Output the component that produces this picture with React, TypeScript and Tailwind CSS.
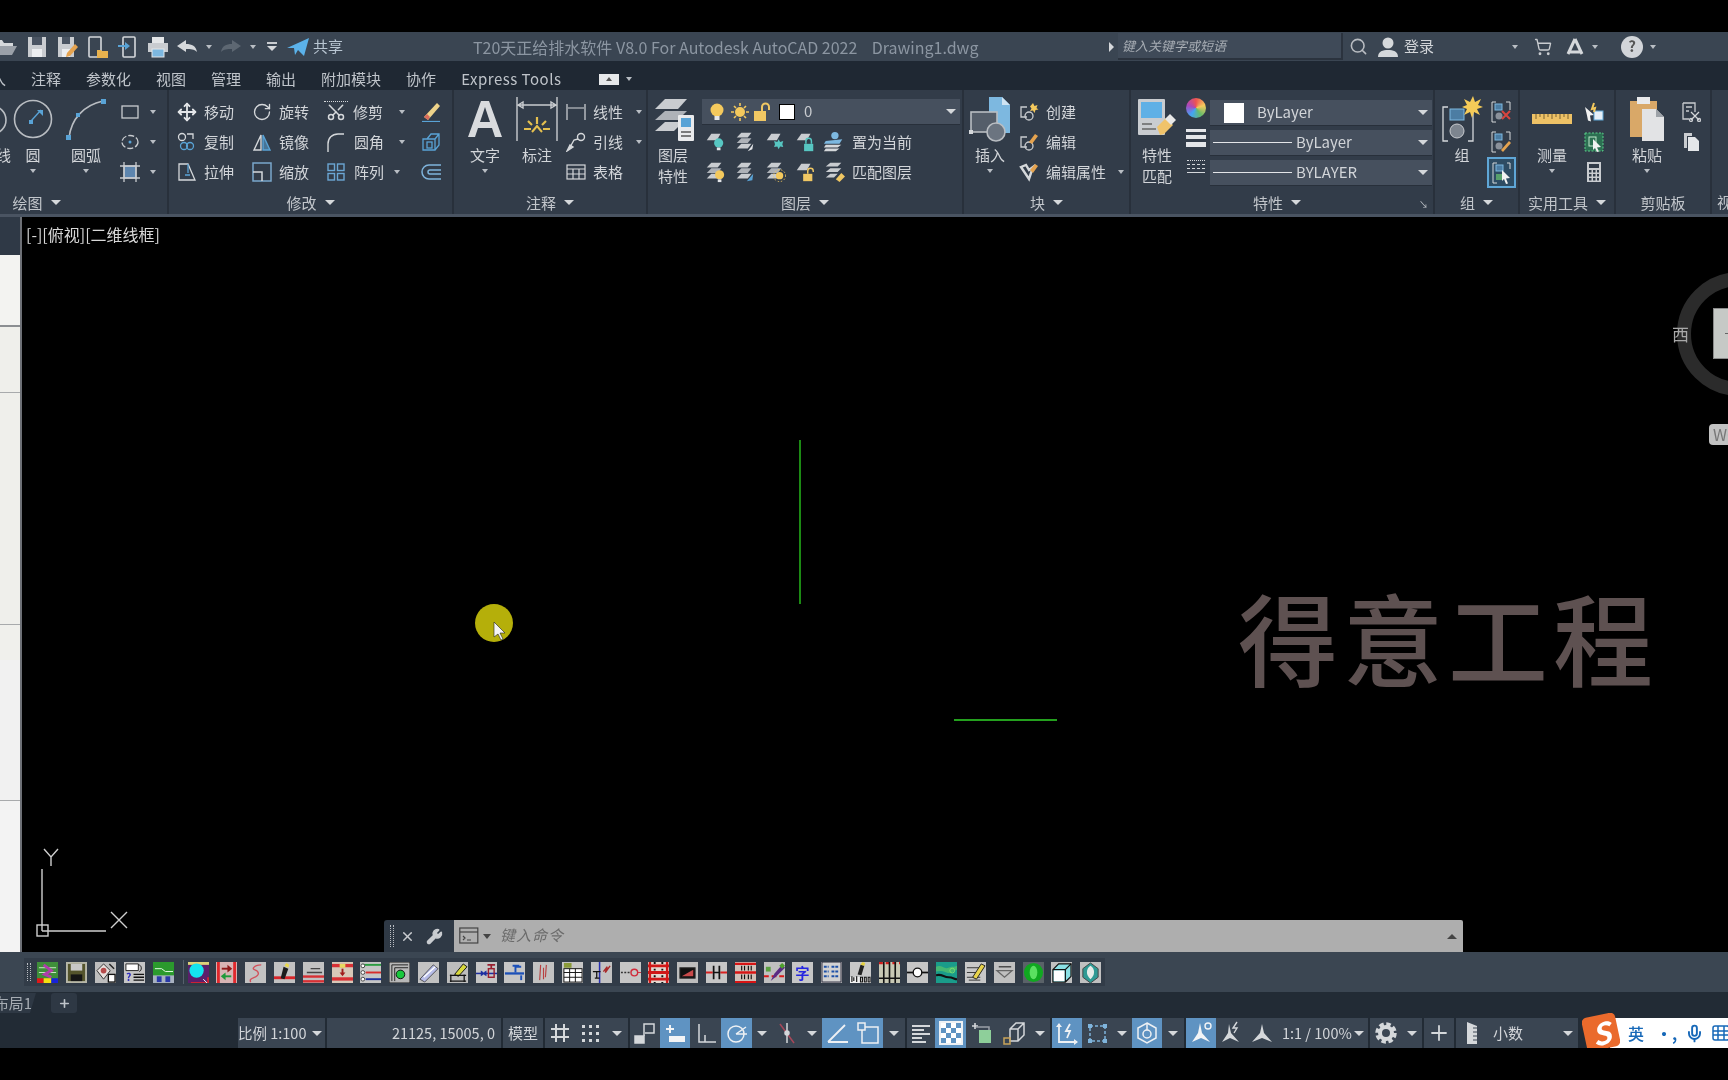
import React from 'react';
import { Move, RotateCw, Scissors, Search, ShoppingCart, Plus, Mic, X, Wrench } from 'lucide-react';

const font = 'font-["Noto_Sans_CJK_SC","Noto_Sans",sans-serif]';

function Caret({ light }: { light?: boolean }) {
  return (
    <span
      className={
        light
          ? 'inline-block w-0 h-0 border-x-[5px] border-t-[5px] border-x-transparent border-t-[#d5d8db]'
          : 'inline-block w-0 h-0 border-x-[3.5px] border-t-[4px] border-x-transparent border-t-[#b9bec4]'
      }
    />
  );
}

function Panel({ w, title, caret = true, corner, pr = 0, children }: { w: number; title: string; caret?: boolean; corner?: boolean; pr?: number; children?: React.ReactNode }) {
  return (
    <div style={{ width: w }} className="shrink-0 h-full flex flex-col border-r-2 border-[#28303b] relative">
      <div className="h-[100px] flex overflow-hidden">{children}</div>
      <div style={{ paddingRight: pr }} className="flex-1 flex items-center justify-center gap-[8px] text-[15px] text-[#c2c6cb] pt-[2px]">
        <span>{title}</span>
        {caret && <Caret light />}
      </div>
      {corner && <span className="absolute right-[5px] bottom-[5px] text-[9px] leading-none text-[#c2c6cb]">↘</span>}
    </div>
  );
}

function Large({ w, icon, lines, caret = true, ml = 0 }: { w: number; icon: React.ReactNode; lines: string[]; caret?: boolean; ml?: number }) {
  return (
    <div style={{ width: w, marginLeft: ml }} className="shrink-0 flex flex-col items-center pt-[7px]">
      <div className="h-[44px] flex items-center justify-center">{icon}</div>
      <div className="mt-[3px] flex flex-col items-center text-[15px] leading-[21px] text-[#d2d5d9]">
        {lines.map((t) => (
          <span key={t}>{t}</span>
        ))}
      </div>
      {caret && <div className="mt-[4px] flex"><Caret /></div>}
    </div>
  );
}

function Small({ icon, text, caret, w, gap = 7 }: { icon: React.ReactNode; text?: string; caret?: number; w?: number; gap?: number }) {
  return (
    <div style={{ width: w, gap }} className="h-[30px] flex items-center shrink-0 text-[15px] text-[#d2d5d9] whitespace-nowrap">
      <span className="w-[20px] h-[20px] flex items-center justify-center shrink-0">{icon}</span>
      {text && <span>{text}</span>}
      {caret !== undefined && <span style={{ marginLeft: caret }} className="flex"><Caret /></span>}
    </div>
  );
}

function IconTail({ icon, w = 22 }: { icon: React.ReactNode; w?: number }) {
  return (
    <div style={{ width: w }} className="h-[30px] flex items-center justify-between shrink-0">
      <span className="w-[20px] h-[20px] flex items-center justify-center">{icon}</span>
      <Caret />
    </div>
  );
}

/* ribbon drawings */
const B = '#59a3d6';
const Tile = ({ c, children }: { c: string; children?: React.ReactNode }) => (
  <svg width="22" height="22" viewBox="0 0 24 24" className="shrink-0">
    <path d="M8 3h10l-4 7H3z" fill="#c9ccd0" />
    <g fill={c}>{children}</g>
  </svg>
);
const Stack = ({ children }: { children?: React.ReactNode }) => (
  <svg width="22" height="22" viewBox="0 0 24 24" className="shrink-0">
    <path d="M8 2h11l-4 5H3z" fill="#c9ccd0" />
    <path d="M8 8h11l-4 5H3z" fill="#aeb2b8" />
    <path d="M8 14h11l-4 5H3z" fill="#c9ccd0" />
    {children}
  </svg>
);

const ringIcon = (
  <svg width="42" height="42" viewBox="0 0 42 42" fill="none">
    <circle cx="21" cy="21" r="18.5" stroke="#b9bdc2" strokeWidth="1.6" />
    <path d="M19 23L29 12" stroke={B} strokeWidth="1.4" />
    <rect x="17" y="22" width="4" height="4" fill={B} />
    <path d="M25 12h6v6z" fill={B} />
  </svg>
);
const arcIcon = (
  <svg width="44" height="44" viewBox="0 0 44 44" fill="none">
    <path d="M5 41C7 22 20 8 39 4" stroke="#b9bdc2" strokeWidth="1.6" />
    <rect x="2" y="38" width="5" height="5" fill={B} />
    <rect x="12" y="16" width="4" height="4" fill={B} />
    <rect x="37" y="2" width="5" height="5" fill={B} />
  </svg>
);
const textA = (
  <svg width="36" height="42" viewBox="0 0 36 42" fill="#d9dbde">
    <path d="M14 3h8l13 36h-7l-3-9H11l-3 9H1zM13 24h10L18 9z" fillRule="evenodd" />
  </svg>
);
const dimIcon = (
  <svg width="42" height="46" viewBox="0 0 42 46" fill="none" stroke="#c9ccd0" strokeWidth="1.4">
    <path d="M1 1v44M41 1v44M2 9h38M2 9l5-3v6zM40 9l-5-3v6z" />
    <g stroke="#e5c04f" strokeWidth="2.2">
      <path d="M21 21v7M12 25l4 4M30 25l-4 4M8 33h7M27 33h7" />
    </g>
    <path d="M16 36l5-6 5 6" stroke="#e5c04f" strokeWidth="2" />
  </svg>
);
const layerProps = (
  <svg width="42" height="46" viewBox="0 0 42 46">
    <path d="M13 3h22l-9 10H3z" fill="#c9ccd0" />
    <path d="M13 15h22l-9 9H3z" fill="#aeb2b8" />
    <path d="M13 26h18l-9 9H3z" fill="#c9ccd0" />
    <rect x="26" y="19" width="16" height="26" rx="1" fill="#e9eaec" />
    <rect x="29" y="22" width="10" height="9" fill={B} />
    <path d="M29 36h10M29 40h10" stroke="#555" strokeWidth="1.5" />
  </svg>
);
const insertIcon = (
  <svg width="42" height="46" viewBox="0 0 42 46" fill="none">
    <path d="M20 1h13l8 8v28H20z" fill="#7db8e0" />
    <path d="M33 1v8h8" fill="#cfe3f2" />
    <rect x="2" y="16" width="26" height="20" fill="#555e6a" stroke="#b9bdc2" strokeWidth="1.6" />
    <circle cx="27" cy="36" r="9" fill="#6b7480" stroke="#b9bdc2" strokeWidth="1.6" />
    <rect x="0" y="34" width="4" height="4" fill="#d5d8db" />
  </svg>
);
const matchProps = (
  <svg width="40" height="44" viewBox="0 0 40 44">
    <rect x="1" y="2" width="27" height="36" rx="1" fill="#c9ccd0" />
    <rect x="4" y="5" width="21" height="16" fill="#5fb0e6" />
    <path d="M5 27h10M5 32h14" stroke="#666" strokeWidth="1.6" />
    <path d="M20 30l9-9 7 7-9 9-4 1z" fill="#f0c36a" />
    <path d="M28 22l5-5 6 6-5 5z" fill="#e8e8e8" />
  </svg>
);
const groupBig = (
  <svg width="42" height="46" viewBox="0 0 42 46" fill="none">
    <path d="M7 11H2v34h5M27 11h5v34h-5" stroke="#d5d8db" strokeWidth="1.3" />
    <rect x="9" y="13" width="14" height="11" fill="#4c7da3" stroke="#7db8e0" />
    <circle cx="16" cy="35" r="7" fill="#7d858f" stroke="#c9ccd0" />
    <path d="M32 0l2 6 6-3-3 6 5 2-6 2 3 6-6-3-2 6-2-6-6 3 3-6-5-2 5-2-3-6 6 3z" fill="#f5cb58" />
  </svg>
);
const ruler = (
  <svg width="40" height="12" viewBox="0 0 40 12">
    <rect x="0" y="1" width="40" height="10" fill="#eec266" />
    <path d="M4 1v5M8 1v3M12 1v5M16 1v3M20 1v5M24 1v3M28 1v5M32 1v3M36 1v5" stroke="#7a6330" strokeWidth="1" />
  </svg>
);
const paste = (
  <svg width="36" height="46" viewBox="0 0 36 46">
    <rect x="1" y="5" width="27" height="36" fill="#d9a868" />
    <rect x="8" y="1" width="13" height="7" fill="#e9eaec" />
    <path d="M13 13h14l8 8v24H13z" fill="#e2e3e5" />
    <path d="M27 13v8h8" fill="#9da2a8" />
  </svg>
);

const terminalIcon = (
  <svg width="20" height="18" viewBox="0 0 20 18" fill="none" stroke="#444" strokeWidth="1.2">
    <rect x=".8" y="1" width="18" height="15" />
    <path d="M1 5h18" />
    <path d="M4 9l2 2-2 2M8 13h4" />
  </svg>
);

/* tool palette glyphs, drawn on a 22 box */
const tools: React.ReactNode[] = [
  <g key="0"><rect width="22" height="22" fill="#3f8f3a" /><path d="M2 6h18M2 11h18" stroke="#cfe8c8" /><path d="M7 3l8 6-7 4 7 3" stroke="#b03dab" strokeWidth="3" fill="none" /><rect y="17" width="7" height="5" fill="#e01818" /><rect x="7" y="17" width="8" height="5" fill="#f3e010" /><rect x="15" y="17" width="7" height="5" fill="#1822d8" /></g>,
  <g key="1"><rect width="22" height="22" fill="#b7b7a8" /><rect x="2" y="2" width="18" height="18" fill="#54542c" /><rect x="5" y="2" width="12" height="7" fill="#c8c8c8" /><rect x="5" y="13" width="12" height="7" fill="#151515" /></g>,
  <g key="2"><rect width="22" height="22" fill="#bdbdbd" /><path d="M9 2l7 7-7 9-7-9z" fill="#e7dfdc" stroke="#333" /><circle cx="9" cy="9" r="3" fill="#b54a4a" /><path d="M15 2l5 5" stroke="#222" strokeWidth="1.5" /><rect x="14" y="13" width="7" height="8" fill="#fff" stroke="#111" strokeWidth="1.4" /></g>,
  <g key="3"><rect width="22" height="22" fill="#c6c6c6" /><path d="M2 2h13v7H2z" fill="#fff" stroke="#222" /><text x="2" y="20" fontSize="11" fill="#2d2dbf" fontWeight="700" stroke="none">?</text><path d="M10 13h11M10 16h11M10 19h11" stroke="#111" strokeWidth="1.4" /><path d="M15 3c4 0 4 6 1 7" stroke="#222" fill="none" /></g>,
  <g key="4"><rect width="22" height="22" fill="#2b9a2d" /><path d="M2 7h7l4 3h8" stroke="#e8ffe8" fill="none" /><rect y="14" width="22" height="8" fill="#a8b2c0" /><rect x="4" y="15" width="5" height="6" fill="#2a3aa8" /><rect x="13" y="15" width="5" height="6" fill="#2a3aa8" /></g>,
  <g key="5"><rect width="22" height="22" fill="#5b1f6b" /><rect y="0" width="22" height="3" fill="#ddd27a" /><path d="M3 22h18v-6" stroke="#c23" strokeWidth="2" fill="none" /><circle cx="9" cy="9" r="7.5" fill="#14e6f0" /><path d="M16 18l4 4" stroke="#fff" /></g>,
  <g key="6"><rect width="22" height="22" fill="#d8b4b4" /><rect x="1" y="0" width="3" height="22" fill="#e0282c" /><rect x="18" y="0" width="3" height="22" fill="#e0282c" /><path d="M6 7h8" stroke="#8f1a1a" strokeWidth="2" /><path d="M12 3l5 4-5 4z" fill="#8f1a1a" /><path d="M8 15h8" stroke="#1f9a3a" strokeWidth="2" /><path d="M10 11l-5 4 5 4z" fill="#1f9a3a" /></g>,
  <g key="7"><rect width="22" height="22" fill="#c2c2c2" /><path d="M6 21c-3-5 8-4 8-9S7 9 9 6s8-3 8-3" stroke="#d2505a" strokeWidth="1.4" fill="none" /></g>,
  <g key="8"><rect width="22" height="22" fill="#c2c2c2" /><rect y="15" width="22" height="3" fill="#d8262a" /><path d="M7 17l3-12 5 2-4 11z" fill="#1b1b1b" /><path d="M11 4l4 2 1-3-3-2z" fill="#e8d84c" /></g>,
  <g key="9"><rect width="22" height="22" fill="#c2c2c2" /><rect y="14" width="22" height="2.5" fill="#d83034" /><rect y="19" width="22" height="2.5" fill="#d83034" /><path d="M4 11h16M8 7h10" stroke="#444" strokeWidth="1.4" /></g>,
  <g key="10"><rect width="22" height="22" fill="#d8c8b8" /><rect y="2" width="22" height="3.5" fill="#d83034" /><rect y="16" width="22" height="3.5" fill="#d83034" /><rect x="8" y="2" width="6" height="4" fill="#e8d860" /><path d="M11 7v6" stroke="#a01c1c" strokeWidth="2" /><path d="M8 11h6l-3 4z" fill="#a01c1c" /></g>,
  <g key="11"><rect width="22" height="22" fill="#c6c6c6" /><path d="M2 3h20" stroke="#2a9c40" strokeWidth="2" /><path d="M6 11h16" stroke="#d82c2c" strokeWidth="2" /><path d="M6 18h16" stroke="#1c2ea0" strokeWidth="2" /><g fill="#fff" stroke="#444"><circle cx="3" cy="4" r="2" /><circle cx="3" cy="11" r="2" /><circle cx="3" cy="18" r="2" /></g></g>,
  <g key="12"><rect width="22" height="22" fill="#b8b8b8" stroke="#111" /><path d="M3 20V3h17M6 20V6h14" stroke="#222" fill="none" /><circle cx="12" cy="13" r="4.5" fill="#18c83c" stroke="#111" /></g>,
  <g key="13"><rect width="22" height="22" fill="#c2c2c2" /><path d="M2 18L16 3l5 4L7 21z" fill="#b7bde8" stroke="#333" strokeWidth=".8" /><path d="M6 16L18 5" stroke="#fff" strokeWidth="1.4" /></g>,
  <g key="14"><rect width="22" height="22" fill="#bdbdbd" /><path d="M8 13l9-11 4 3-9 10z" fill="#d8d83c" stroke="#111" /><path d="M3 14h17M3 20h17M4 13v8M18 13v8" stroke="#111" strokeWidth="1.3" /></g>,
  <g key="15"><rect width="22" height="22" fill="#c6c6c6" /><path d="M0 12h22" stroke="#1c2ea0" strokeWidth="1.6" /><path d="M5 9l5 3-5 3zM11 9l-5 3 5 3z" fill="#1c2ea0" /><rect x="13" y="7" width="6" height="9" fill="none" stroke="#9a2030" strokeWidth="1.5" /><path d="M16 7V3M12 3h8" stroke="#9a2030" strokeWidth="1.8" /></g>,
  <g key="16"><rect width="22" height="22" fill="#c6c6c6" /><path d="M1 12h20" stroke="#1c50b8" strokeWidth="2.4" /><path d="M12 11V5h6M9 4h7" stroke="#1c50b8" strokeWidth="2" fill="none" /><path d="M18 14v5" stroke="#1c50b8" strokeWidth="2" /></g>,
  <g key="17"><rect width="22" height="22" fill="#c2c2c2" /><path d="M8 3l-1 16M11 6v12M14 3l-1 13" stroke="#b84040" strokeWidth="1.2" fill="none" /></g>,
  <g key="18"><rect width="22" height="22" fill="#c6c6c6" /><rect x="2" y="7" width="19" height="14" fill="#fff" stroke="#111" /><path d="M2 11h19M2 16h19M8 7v14M14 7v14" stroke="#111" /><rect x="2" y="1" width="8" height="5" fill="#8a9a38" /></g>,
  <g key="19"><rect width="22" height="22" fill="#c2c2c2" /><path d="M9 0v22" stroke="#2830b0" strokeWidth="1.6" /><path d="M2 10h8M6 10v7M4 17h5" stroke="#111" strokeWidth="1.3" fill="none" /><path d="M13 10l4-5-2 6 5-7" stroke="#a82828" strokeWidth="1.4" fill="none" /></g>,
  <g key="20"><rect width="22" height="22" fill="#c6c6c6" /><path d="M1 11h9" stroke="#333" strokeDasharray="2 1.5" strokeWidth="1.6" /><circle cx="15" cy="11" r="3.5" fill="none" stroke="#d02a3a" strokeWidth="1.5" /><path d="M18 11h4" stroke="#d02a3a" /></g>,
  <g key="21"><rect width="22" height="22" fill="#e4d8d0" /><path d="M2 0v22M20 0v22" stroke="#d01818" strokeWidth="2.5" /><path d="M0 4h22M0 11h22M0 18h22" stroke="#d01818" strokeWidth="3" /><path d="M7 0v22M15 0v22" stroke="#111" strokeDasharray="2 5" strokeWidth="2" /></g>,
  <g key="22"><rect width="22" height="22" fill="#bdbdbd" /><rect x="3" y="6" width="16" height="11" fill="#111" stroke="#333" /><path d="M5 15L17 8v7z" fill="#c84a4a" /></g>,
  <g key="23"><rect width="22" height="22" fill="#c6c6c6" /><path d="M0 11h7M15 11h7" stroke="#d82020" strokeWidth="2" /><path d="M8 4v14M14 4v14M8 11h6" stroke="#111" strokeWidth="1.8" /></g>,
  <g key="24"><rect width="22" height="22" fill="#d0c0b8" /><path d="M0 11h22M0 2h22M0 21h22" stroke="#d81414" strokeWidth="2.4" /><path d="M7 4v5M10 4v5M14 13v5M17 13v5M7 13v5M10 13v5M14 4v5M17 4v5" stroke="#111" strokeWidth="1.2" /></g>,
  <g key="25"><rect width="22" height="22" fill="#c0c0c0" /><path d="M0 15h22" stroke="#d81818" strokeWidth="2" strokeDasharray="5 3" /><path d="M7 20l4-8 8-9 3 3-9 9z" fill="#5a2a84" /><path d="M16 4l3-3 3 3-3 3z" fill="#4ca02c" /><path d="M2 5h5v5H2z" fill="#5aa040" /></g>,
  <g key="26"><rect width="22" height="22" fill="#c6c6c6" /><text x="11" y="17.5" textAnchor="middle" fontSize="15" fill="#2424e0" fontWeight="700" stroke="none">字</text></g>,
  <g key="27"><rect width="22" height="22" fill="#d2d2d2" /><rect x="1" y="0" width="20" height="21" fill="none" stroke="#223" /><path d="M3 5h5M11 5h7M3 10h5M11 10h7M3 15h5M11 15h7" stroke="#1c50a8" strokeWidth="2" strokeDasharray="3 1" /></g>,
  <g key="28"><rect width="22" height="15" fill="#c8c8c8" /><rect y="15" width="22" height="7" fill="#f0f0f0" /><path d="M8 13l3-10 4 1-3 10z" fill="#222" /><path d="M11 3l4 1 1-3-3-1z" fill="#e4d040" /><path d="M2 15v6M4 16v4M7 15v6M11 16h2v5h-2zM15 16h2v5h-2zM19 16h2v5h-2z" stroke="#111" strokeWidth="1.2" fill="none" /></g>,
  <g key="29"><rect width="22" height="22" fill="#c8c8b4" /><path d="M0 1h22" stroke="#d01c1c" strokeWidth="2.6" strokeDasharray="4 3" /><path d="M5 0v22M11 0v22M17 0v22M0 17h22" stroke="#111" strokeWidth="1.7" /></g>,
  <g key="30"><rect width="22" height="22" fill="#c6c6c6" /><path d="M0 11h22" stroke="#111" strokeWidth="1.8" /><circle cx="11" cy="11" r="4.5" fill="#fff" stroke="#111" strokeWidth="1.4" /></g>,
  <g key="31"><rect width="22" height="22" fill="#1a9c8a" /><path d="M0 5c6-3 8 3 13 1s6 0 9-2v4c-4 1-6 5-11 3S3 9 0 10z" fill="#45b874" /><path d="M0 14c6-2 8 2 13 2s6 2 9 2" stroke="#111" strokeWidth="2.2" fill="none" /><circle cx="17" cy="9" r="2.5" fill="none" stroke="#7ae070" /></g>,
  <g key="32"><rect width="22" height="22" fill="#c8c8c8" /><path d="M2 6h14M2 11h14M2 16h14M4 19h12" stroke="#333" /><path d="M8 16l9-14 4 2-9 14z" fill="#e8d44c" stroke="#222" /></g>,
  <g key="33"><rect width="22" height="22" fill="#c0c0c0" /><path d="M3 9h16l-8 7z" fill="none" stroke="#666" strokeWidth="1.3" /><path d="M5 5h13" stroke="#444" strokeWidth="1.5" /></g>,
  <g key="34"><rect width="22" height="22" fill="#5a6268" /><circle cx="11" cy="11" r="10" fill="#10a820" /><ellipse cx="11" cy="11" rx="4" ry="7" fill="#5ae060" /></g>,
  <g key="35"><rect width="22" height="22" fill="#c0c0c0" /><path d="M2 8l6-6h13v13l-6 6H2z" fill="#8ae0e4" stroke="#111" strokeWidth="1.3" /><path d="M2 8h13v13M15 8l6-6" stroke="#111" strokeWidth="1.3" fill="none" /><rect x="3" y="9" width="11" height="11" fill="#fff" /></g>,
  <g key="36"><rect width="22" height="22" fill="#c0c0c0" /><path d="M11 1l8 6v9l-8 6-8-6V7z" fill="#2e9a94" stroke="#444" /><path d="M11 4c5 3 5 10 0 14-5-4-5-11 0-14z" fill="#e4ece8" /></g>,
];

function Tool({ children }: { children?: React.ReactNode }) {
  return (
    <svg width="21" height="21" viewBox="0 0 22 22" className="shrink-0">
      {children}
    </svg>
  );
}

function StatusCell({ w = 30, active, children }: { w?: number; active?: boolean; children?: React.ReactNode }) {
  return <div style={{ width: w }} className={`h-full shrink-0 flex items-center justify-center ${active ? 'bg-[#5f93c2]' : ''}`}>{children}</div>;
}

function StatusGroup({ children }: { children?: React.ReactNode }) {
  return <div className="h-full flex items-center bg-[#3a4552] shrink-0">{children}</div>;
}

const Sw = ({ children }: { children?: React.ReactNode }) => (
  <svg width="24" height="24" viewBox="0 0 24 24" fill="none" stroke="#d5d8db" strokeWidth="1.5">{children}</svg>
);

export default function App() {
  return (
    <div className={`w-[1728px] h-[1080px] overflow-hidden bg-black flex flex-col blur-[0.5px] ${font}`}>
      <div className="h-[32px] shrink-0" />

      {/* title bar */}
      <div className="h-[29px] shrink-0 bg-[#3a4552] flex items-center text-[#d2d5d9]">
        <span className="-ml-[7px] w-[24px] flex">
          <svg width="24" height="22" viewBox="0 0 24 22"><path d="M0 4h9l2 3h9v3H7l-5 9H0z" fill="#d5d8db" /><path d="M7 10h17l-5 9H2z" fill="#9aa0a8" /></svg>
        </span>
        <span className="ml-[8px] flex">
          <svg width="24" height="24" viewBox="0 0 24 24"><path d="M3 2h18v20H3z" fill="#c9ccd0" /><rect x="7" y="2" width="10" height="8" fill="#4a5462" /><rect x="7" y="14" width="10" height="8" fill="#eceef0" /></svg>
        </span>
        <span className="ml-[6px] flex">
          <svg width="24" height="24" viewBox="0 0 24 24"><path d="M3 2h16v20H3z" fill="#c9ccd0" /><rect x="7" y="2" width="8" height="7" fill="#4a5462" /><rect x="7" y="14" width="8" height="8" fill="#eceef0" /><path d="M12 18l8-9 3 3-8 9-4 1z" fill="#e5a34f" /></svg>
        </span>
        <span className="ml-[6px] flex">
          <svg width="24" height="24" viewBox="0 0 24 24"><rect x="4" y="2" width="12" height="20" rx="1" fill="none" stroke="#d5d8db" strokeWidth="1.6" /><path d="M12 15h4l1 1h6v7H12z" fill="#e8b24e" /></svg>
        </span>
        <span className="ml-[7px] flex">
          <svg width="24" height="24" viewBox="0 0 24 24" fill="none"><rect x="7" y="2" width="12" height="20" rx="1" stroke="#d5d8db" strokeWidth="1.6" /><path d="M2 11h9" stroke={B} strokeWidth="2" /><path d="M9 7l5 4-5 4z" fill={B} /></svg>
        </span>
        <span className="ml-[6px] flex">
          <svg width="24" height="24" viewBox="0 0 24 24"><rect x="6" y="2" width="12" height="6" fill="#e4e6e8" /><rect x="2" y="8" width="20" height="9" fill="#c9ccd0" /><rect x="6" y="14" width="12" height="8" fill="#7db8e0" stroke="#e4e6e8" /></svg>
        </span>
        <span className="ml-[5px] flex">
          <svg width="24" height="24" viewBox="0 0 24 24"><path d="M2 11l9-6v4c6 0 10 2 11 8-3-3-6-3-11-3v3z" fill="#d5d8db" /></svg>
        </span>
        <span className="ml-[7px] flex"><Caret /></span>
        <span className="ml-[7px] flex">
          <svg width="24" height="24" viewBox="0 0 24 24"><path d="M22 11l-9-6v4C7 9 3 11 2 17c3-3 6-3 11-3v3z" fill="#5d6772" /></svg>
        </span>
        <span className="ml-[7px] flex"><Caret /></span>
        <span className="ml-[10px] w-[12px] flex flex-col items-center gap-[2px]">
          <span className="w-[10px] h-[2px] bg-[#c9ccd0]" />
          <Caret light />
        </span>
        <span className="ml-[8px] flex">
          <svg width="24" height="24" viewBox="0 0 24 24"><path d="M1 13L23 3l-5 18-6-6-3 5-1-7z" fill="#5bb2ea" /></svg>
        </span>
        <span className="ml-[3px] text-[15px] text-[#b9c6d2]">共享</span>
        <span className="ml-[130px] w-[636px] text-[16px] text-[#8c96a2] whitespace-pre">T20天正给排水软件 V8.0 For Autodesk AutoCAD 2022    Drawing1.dwg</span>
        <span className="w-0 h-0 border-y-[5px] border-l-[5px] border-y-transparent border-l-[#d5d8db]" />
        <div className="ml-[4px] w-[225px] h-[27px] bg-[#3f4a58] border-r-2 border-b-2 border-[#2b333e] flex items-center px-1 text-[13px] italic text-[#a6acb3]">键入关键字或短语</div>
        <span className="ml-[6px] flex"><Search size={19} color="#b9bdc2" strokeWidth={2} /></span>
        <span className="ml-[9px] flex">
          <svg width="22" height="22" viewBox="0 0 22 22" fill="#d5d8db"><circle cx="11" cy="7" r="5.5" /><path d="M1 21c0-6 5-7 10-7s10 1 10 7z" /></svg>
        </span>
        <span className="ml-[5px] text-[15px]">登录</span>
        <span className="ml-[78px] flex"><Caret /></span>
        <span className="ml-[16px] flex"><ShoppingCart size={18} color="#c9ccd0" strokeWidth={1.8} /></span>
        <span className="ml-[12px] flex">
          <svg width="22" height="22" viewBox="0 0 22 22" fill="none" stroke="#d5d8db" strokeWidth="3"><path d="M11 3L4 18M11 3l7 15M4 16h14" /></svg>
        </span>
        <span className="ml-[6px] flex"><Caret /></span>
        <span className="ml-[23px] w-[22px] h-[22px] rounded-full bg-[#d2d5d9] flex items-center justify-center text-[15px] font-bold text-[#555]">?</span>
        <span className="ml-[7px] flex"><Caret /></span>
      </div>

      {/* ribbon tabs */}
      <div className="h-[29px] shrink-0 bg-[#1f2833] flex items-center pt-[7px] text-[15px] text-[#bfc4ca] gap-[25px] -ml-[9px]">
        <span>入</span>
        <span>注释</span>
        <span>参数化</span>
        <span>视图</span>
        <span>管理</span>
        <span>输出</span>
        <span>附加模块</span>
        <span>协作</span>
        <span className="tracking-[0.5px]">Express Tools</span>
        <span className="ml-[13px] flex items-center gap-[7px]">
          <span className="w-[20px] h-[11px] bg-[#e6e8ea] flex items-center justify-center"><span className="w-0 h-0 border-x-[3px] border-b-[4px] border-x-transparent border-b-[#555]" /></span>
          <Caret />
        </span>
      </div>

      {/* ribbon */}
      <div className="h-[124px] shrink-0 bg-[#323c49] flex text-[#d2d5d9]">
        <Panel w={169} title="绘图" pr={94}>
          <div className="w-[12px] shrink-0 relative overflow-hidden">
            <svg width="12" height="42" viewBox="0 0 12 42" className="absolute left-0 top-[9px]" fill="none"><circle cx="-8" cy="21" r="14" stroke="#b9bdc2" strokeWidth="1.6" /></svg>
            <span className="absolute right-[1px] top-[54px] text-[15px] leading-[21px]">线</span>
          </div>
          <Large w={42} icon={ringIcon} lines={['圆']} />
          <Large w={60} icon={arcIcon} lines={['圆弧']} ml={2} />
          <div className="flex flex-col pt-[7px] ml-[4px]">
            <IconTail w={36} icon={<svg width="20" height="20" viewBox="0 0 20 20" fill="none" stroke="#c9ccd0" strokeWidth="1.3"><rect x="2" y="4" width="16" height="12" /></svg>} />
            <IconTail w={36} icon={<svg width="20" height="20" viewBox="0 0 20 20" fill="none" stroke="#c9ccd0" strokeWidth="1.3"><ellipse cx="10" cy="10" rx="8" ry="6.5" strokeDasharray="6 2" /><circle cx="10" cy="10" r="1.5" fill={B} stroke="none" /></svg>} />
            <IconTail w={36} icon={<svg width="20" height="20" viewBox="0 0 20 20" fill="none" stroke="#c9ccd0" strokeWidth="1.3"><rect x="4" y="4" width="12" height="12" fill="#5d85ae" /><path d="M0 4h20M0 16h20M4 0v20M16 0v20" /></svg>} />
          </div>
        </Panel>

        <Panel w={285} title="修改">
          <div className="pl-[8px] pt-[7px] grid grid-cols-[75px_74px_95px_24px] h-fit">
            <Small icon={<Move size={20} color="#e4e6e9" strokeWidth={2.2} />} text="移动" />
            <Small icon={<RotateCw size={20} color="#d5d8db" strokeWidth={1.6} />} text="旋转" />
            <Small
              icon={
                <span className="relative flex">
                  <Scissors size={20} color="#d5d8db" strokeWidth={1.8} className="-rotate-90" />
                  <span className="absolute -left-[2px] -right-[2px] -top-[1px] border-t border-dotted border-[#d5d8db]" />
                </span>
              }
              text="修剪"
              caret={9}
            />
            <Small icon={<svg width="20" height="20" viewBox="0 0 20 20" fill="none"><path d="M3 15L16 1l3 3L7 18z" fill="#eed38a" /><path d="M3 15l3-3 3 3-2 3z" fill="#d86a5a" /><path d="M1 19.500h18" stroke={B} strokeWidth="1.2" /></svg>} />

            <Small icon={<svg width="20" height="20" viewBox="0 0 20 20" fill="none" stroke="#d5d8db" strokeWidth="1.3"><circle cx="5" cy="5" r="3.5" /><circle cx="7" cy="14" r="3.5" stroke={B} /><circle cx="13" cy="14" r="3.5" stroke={B} /><path d="M10 2h6v5" /></svg>} text="复制" />
            <Small icon={<svg width="20" height="20" viewBox="0 0 20 20" fill="none" stroke="#d5d8db" strokeWidth="1.4"><path d="M9 3v15H2z" /><path d="M11 3v15h7z" fill={B} fillOpacity=".55" stroke={B} /></svg>} text="镜像" />
            <Small icon={<svg width="20" height="20" viewBox="0 0 20 20" fill="none" stroke="#d5d8db" strokeWidth="1.4"><path d="M2 20v-8C2 6 6 2 12 2h6" /></svg>} text="圆角" gap={8} caret={7} />
            <Small icon={<svg width="20" height="20" viewBox="0 0 20 20" fill="none" stroke={B} strokeWidth="1.3"><path d="M2 7h12v11H2zM6 7l4-5h8v11l-4 5M14 7l4-5" /><rect x="6" y="10" width="5" height="6" /></svg>} />

            <Small icon={<svg width="20" height="20" viewBox="0 0 20 20" fill="none" stroke="#d5d8db" strokeWidth="1.3"><path d="M2 2h9l7 16H2zM2 18V2" /><path d="M11 2v9M8 13h5" stroke={B} /></svg>} text="拉伸" />
            <Small icon={<svg width="20" height="20" viewBox="0 0 20 20" fill="none" stroke="#7aa7cb" strokeWidth="1.5"><path d="M1 1h18v18H1z" /><path d="M1 10h9v9" stroke="#d5d8db" /></svg>} text="缩放" />
            <Small icon={<svg width="20" height="20" viewBox="0 0 20 20" fill="none" stroke="#6ba6d4" strokeWidth="1.4"><rect x="2" y="2" width="6.5" height="6.5" /><rect x="11.5" y="2" width="6.5" height="6.5" /><rect x="2" y="11.5" width="6.5" height="6.5" /><rect x="11.5" y="11.5" width="6.5" height="6.5" /></svg>} text="阵列" gap={8} caret={2} />
            <Small icon={<svg width="20" height="20" viewBox="0 0 20 20" fill="none" stroke="#7fb4dc" strokeWidth="1.5"><path d="M20 3H8a7 7 0 000 14h12M20 8H9a2 2 0 000 4h11" /></svg>} />
          </div>
        </Panel>

        <Panel w={194} title="注释">
          <Large w={52} ml={5} icon={textA} lines={['文字']} />
          <Large w={52} icon={dimIcon} lines={['标注']} caret={false} />
          <div className="flex flex-col pt-[7px] pl-[3px]">
            <Small icon={<svg width="20" height="20" viewBox="0 0 20 20" fill="none" stroke="#d5d8db" strokeWidth="1.2"><path d="M1 2v16M19 2v16M2 6h16" /></svg>} text="线性" caret={6} />
            <Small icon={<svg width="20" height="20" viewBox="0 0 20 20" fill="none" stroke="#d5d8db" strokeWidth="1.4"><circle cx="15" cy="5" r="3.5" /><path d="M12 7l-4 1-5 9" /><path d="M1 19l3-6 3 2z" fill="#d5d8db" /></svg>} text="引线" caret={6} />
            <Small icon={<svg width="20" height="20" viewBox="0 0 20 20" fill="none" stroke="#d5d8db" strokeWidth="1.2"><rect x="1" y="3" width="18" height="14" /><path d="M1 7h18M1 12h18M7 7v10M13 7v10" /></svg>} text="表格" />
          </div>
        </Panel>

        <Panel w={316} title="图层">
          <Large w={50} icon={layerProps} lines={['图层', '特性']} caret={false} />
          <div className="flex flex-col pt-[9px] pl-[4px]">
            <div className="w-[258px] h-[26px] bg-[#46505e] border-b border-[#28303b] flex items-center pl-[4px] pr-[4px]">
              <span className="flex ml-[1px]">
                <svg width="20" height="20" viewBox="0 0 20 20"><circle cx="10" cy="8" r="6.5" fill="#f4c95d" /><rect x="7.5" y="14" width="5" height="4" fill="#e4e6e9" /></svg>
              </span>
              <span className="flex ml-[3px]">
                <svg width="20" height="20" viewBox="0 0 20 20"><circle cx="10" cy="10" r="5" fill="#f4c95d" /><path d="M10 1v3M10 16v3M1 10h3M16 10h3M4 4l2 2M14 14l2 2M4 16l2-2M14 6l2-2" stroke="#f4c95d" strokeWidth="1.6" /></svg>
              </span>
              <span className="flex ml-[3px]">
                <svg width="20" height="20" viewBox="0 0 20 20" fill="none"><rect x="1" y="9" width="12" height="10" fill="#f0c763" /><path d="M9 9V5a3.5 3.5 0 017 0v3" stroke="#f0c763" strokeWidth="2" /></svg>
              </span>
              <span className="ml-[6px] w-[16px] h-[16px] bg-white border border-black shrink-0" />
              <span className="ml-[9px] text-[15px] text-[#c9ccd0]">0</span>
              <span className="ml-auto flex"><Caret light /></span>
            </div>
            <div className="h-[30px] mt-[2px] flex items-center pl-[2px] gap-[8px]">
              <Tile c="#57c6c2"><circle cx="16" cy="13" r="5" /><rect x="14" y="18" width="4" height="3" fill="#e4e6e9" /></Tile>
              <Stack><path d="M15 22l6-8-1 6z" fill="#e4e6e9" /></Stack>
              <Tile c="#57c6c2"><path d="M16 9l1.500 3 3.500-1-1 3.500 1 3-3.500-.5-1.500 3-1.500-3-3.500.5 1-3-1-3.500 3.500 1z" /></Tile>
              <Tile c="#57c6c2"><rect x="11" y="14" width="10" height="8" /><path d="M13 14v-3a3 3 0 016 0v3" fill="none" stroke="#57c6c2" strokeWidth="1.600" /></Tile>
              <span className="ml-[-1px] flex items-center gap-[7px] text-[15px] text-[#d2d5d9]">
                <svg width="22" height="22" viewBox="0 0 24 24"><circle cx="13" cy="5" r="4" fill="#7db8e0" /><path d="M3 11l18-2-3 5H1z" fill="#7db8e0" /><path d="M3 15h17l-4 3H1zM3 19h15l-4 3H1z" fill="#d5d8db" /></svg>
                <span>置为当前</span>
              </span>
            </div>
            <div className="h-[30px] flex items-center pl-[2px] gap-[8px]">
              <Stack><circle cx="17" cy="15" r="5" fill="#f4c95d" /><rect x="15" y="20" width="4" height="3" fill="#e4e6e9" /></Stack>
              <Stack><path d="M14 22l7-8-1 7z" fill={B} /></Stack>
              <Stack><circle cx="17" cy="16" r="4" fill="#f4c95d" /><circle cx="17" cy="16" r="6.500" fill="none" stroke="#f4c95d" strokeDasharray="1.500 2" /></Stack>
              <Tile c="#f0c763"><rect x="10" y="14" width="10" height="8" /><path d="M15 14v-3a3 3 0 016 0v1" fill="none" stroke="#f0c763" strokeWidth="1.600" /></Tile>
              <span className="ml-[-1px] flex items-center gap-[7px] text-[15px] text-[#d2d5d9]">
                <svg width="22" height="22" viewBox="0 0 24 24"><path d="M8 2h12l-4 4H3zM8 8h12l-4 4H3zM8 14h8l-4 4H3z" fill="#c9ccd0" /><path d="M14 20l6-7 4 4-6 6z" fill="#f0c763" /></svg>
                <span>匹配图层</span>
              </span>
            </div>
          </div>
        </Panel>

        <Panel w={167} title="块">
          <Large w={52} icon={insertIcon} lines={['插入']} />
          <div className="flex flex-col pt-[7px] pl-[3px]">
            <Small w={110} icon={<svg width="20" height="20" viewBox="0 0 20 20" fill="none" stroke="#c9ccd0" strokeWidth="1.300"><path d="M8 5H2v10h6" /><circle cx="10" cy="14" r="4" /><path d="M14 1l1.500 3 3-1-1 3 2 1.500-3 .5-1 3-1.500-2.500-3 .5 1.500-2.500-1.500-2z" fill="#f4c95d" stroke="none" /></svg>} text="创建" />
            <Small w={110} icon={<svg width="20" height="20" viewBox="0 0 20 20" fill="none" stroke="#c9ccd0" strokeWidth="1.300"><path d="M8 5H2v10h6" /><circle cx="10" cy="14" r="4" /><path d="M10 10l6-8 3 2-6 8z" fill="#e5a34f" stroke="none" /></svg>} text="编辑" />
            <Small w={110} icon={<svg width="20" height="20" viewBox="0 0 20 20"><path d="M2 5l5-2 3 5 4-3-4 12z" fill="none" stroke="#d5d8db" strokeWidth="2.400" /><path d="M11 8l5-6 3 2-5 7z" fill="#e5a34f" /></svg>} text="编辑属性" caret={5} />
          </div>
        </Panel>

        <Panel w={304} title="特性" corner pr={10}>
          <Large w={52} icon={matchProps} lines={['特性', '匹配']} caret={false} />
          <div className="flex flex-col w-[24px] items-center pt-[8px] ml-[1px]">
            <span className="h-[30px] flex">
              <span className="w-[20px] h-[20px] rounded-full bg-[conic-gradient(#ef5350,#f4c95d,#66bb6a,#42a5f5,#ab47bc,#ef5350)]" />
            </span>
            <span className="h-[30px] flex flex-col gap-[3px] pt-[1px]">
              <span className="w-[20px] h-[3px] bg-[#e4e6e9]" />
              <span className="w-[20px] h-[4px] bg-[#e4e6e9]" />
              <span className="w-[20px] h-[5px] bg-[#e4e6e9]" />
            </span>
            <span className="flex flex-col gap-[3px] pt-[2px]">
              <span className="w-[18px] border-t border-dotted border-[#d5d8db]" />
              <span className="w-[18px] border-t border-dashed border-[#d5d8db]" />
              <span className="w-[18px] border-t border-dashed border-[#d5d8db]" />
              <span className="w-[18px] border-t border-[#d5d8db]" />
            </span>
          </div>
          <div className="flex flex-col gap-[4px] pt-[10px] pl-[2px] text-[15px] text-[#d2d5d9]">
            <div className="w-[222px] h-[26px] bg-[#46505e] border-b border-[#28303b] flex items-center pr-[4px]">
              <span className="ml-[14px] w-[20px] h-[20px] bg-white" />
              <span className="ml-[13px]">ByLayer</span>
              <span className="ml-auto flex"><Caret light /></span>
            </div>
            <div className="w-[222px] h-[26px] bg-[#46505e] border-b border-[#28303b] flex items-center pr-[4px]">
              <span className="ml-[3px] w-[79px] h-px bg-[#e4e6e9]" />
              <span className="ml-[4px]">ByLayer</span>
              <span className="ml-auto flex"><Caret light /></span>
            </div>
            <div className="w-[222px] h-[26px] bg-[#46505e] border-b border-[#28303b] flex items-center pr-[4px]">
              <span className="ml-[3px] w-[79px] h-px bg-[#e4e6e9]" />
              <span className="ml-[4px]">BYLAYER</span>
              <span className="ml-auto flex"><Caret light /></span>
            </div>
          </div>
        </Panel>

        <Panel w={85} title="组">
          <Large w={50} ml={2} icon={groupBig} lines={['组']} caret={false} />
          <div className="flex flex-col pt-[7px] gap-0">
            <span className="w-[28px] h-[30px] flex items-center justify-center">
              <svg width="20" height="22" viewBox="0 0 20 22" fill="none"><path d="M5 1H1v20h4M15 1h4v8" stroke="#d5d8db" /><rect x="4" y="3" width="7" height="6" fill="#4c7da3" stroke="#7db8e0" /><circle cx="8" cy="15" r="3.500" fill="#8a9099" /><path d="M11 10l8 8M19 10l-8 8" stroke="#d8453e" strokeWidth="2" /></svg>
            </span>
            <span className="w-[28px] h-[30px] flex items-center justify-center">
              <svg width="20" height="22" viewBox="0 0 20 22" fill="none"><path d="M5 1H1v20h4M15 1h4v8" stroke="#d5d8db" /><rect x="4" y="3" width="7" height="6" fill="#4c7da3" stroke="#7db8e0" /><circle cx="8" cy="15" r="3.500" fill="#8a9099" /><path d="M10 19l8-9 2 2-8 9z" fill="#e5a34f" /></svg>
            </span>
            <span className="w-[29px] h-[31px] flex items-center justify-center bg-[#2e4c63] border-2 border-[#5fa6d6]">
              <svg width="20" height="22" viewBox="0 0 20 22" fill="none"><path d="M5 1H1v20h4M15 1h3v6" stroke="#d5d8db" /><rect x="4" y="3" width="7" height="6" fill="#4c7da3" stroke="#7db8e0" /><rect x="4" y="12" width="7" height="6" fill="#57a06c" /><path d="M10 8l8 8-4 .5 2 5-2 .5-2-5-2 2z" fill="#f2f2f2" /></svg>
            </span>
          </div>
        </Panel>

        <Panel w={96} title="实用工具">
          <Large w={64} icon={ruler} lines={['测量']} />
          <div className="flex flex-col pt-[7px]">
            <Small icon={<svg width="20" height="20" viewBox="0 0 20 20"><path d="M1 5l9 8-4 .5 1 6-3-1-1-5z" fill="#f2f2f2" /><rect x="10" y="9" width="9" height="9" fill="#e6f0f8" stroke="#5fa6d6" /><path d="M10 1l-2 6 3-1-1 4" stroke="#f4c95d" strokeWidth="2" fill="none" /></svg>} />
            <Small icon={<svg width="20" height="20" viewBox="0 0 20 20" fill="none"><rect x="1" y="1" width="18" height="18" fill="#2c6f52" stroke="#5ad08a" strokeDasharray="2 1.500" /><rect x="5" y="5" width="7" height="9" stroke="#bfe8cc" /><path d="M9 7l8 8-4 .5 2 4-2 .5-2-4-2 2z" fill="#f2f2f2" /></svg>} />
            <Small icon={<svg width="20" height="20" viewBox="0 0 20 20" fill="#c9ccd0"><path d="M3 0h14v20H3z" /><rect x="5" y="2" width="10" height="4" fill="#323c49" /><g fill="#323c49"><rect x="5" y="8" width="2.500" height="2.500" /><rect x="9" y="8" width="2.500" height="2.500" /><rect x="13" y="8" width="2" height="2.500" /><rect x="5" y="12" width="2.500" height="2.500" /><rect x="9" y="12" width="2.500" height="2.500" /><rect x="13" y="12" width="2" height="2.500" /><rect x="5" y="16" width="2.500" height="2.500" /><rect x="9" y="16" width="2.500" height="2.500" /><rect x="13" y="16" width="2" height="2.500" /></g></svg>} />
          </div>
        </Panel>

        <Panel w={96} title="剪贴板" caret={false}>
          <Large w={62} icon={paste} lines={['粘贴']} />
          <div className="flex flex-col pt-[7px] pl-[3px]">
            <Small icon={<svg width="20" height="20" viewBox="0 0 20 20" fill="none" stroke="#c9ccd0" strokeWidth="1.300"><path d="M2 1h12v9M2 1v16h6" /><path d="M5 5h6M5 9h3" /><path d="M10 10l8 8M18 10l-8 8" stroke="#d5d8db" /><circle cx="10" cy="18" r="1.500" /><circle cx="18" cy="18" r="1.500" /></svg>} />
            <Small icon={<svg width="20" height="20" viewBox="0 0 20 20"><path d="M3 1h8v3H6v12H3z" fill="#c9ccd0" /><path d="M7 5h7l4 4v10H7z" fill="#e4e6e9" /></svg>} />
          </div>
        </Panel>

        <div className="flex-1 flex flex-col overflow-hidden">
          <div className="h-[100px]" />
          <div className="pl-[5px] pt-[1px] text-[15px] text-[#c2c6cb] leading-[22px]">视</div>
        </div>
      </div>
      <div className="h-[3px] shrink-0 bg-[#4a5462]" />

      {/* workspace */}
      <div className="flex-1 flex min-h-0">
        <div className="w-[22px] shrink-0 flex flex-col border-r-2 border-[#6d7076]">
          <div className="h-[38px] bg-[#2f3946]" />
          <div className="h-[72px] bg-[#f3f3f1] border-b-2 border-[#8b8e92]" />
          <div className="h-[66px] bg-[#efefeb] border-b border-[#a8aaac]" />
          <div className="h-[232px] bg-[#efefeb] border-b border-[#a8aaac]" />
          <div className="h-[35px] bg-[#f0f0ec]" />
          <div className="h-[141px] bg-[#f1f1f1] border-b border-[#a8aaac]" />
          <div className="flex-1 bg-[#f3f3f3]" />
        </div>

        <div className="flex-1 relative bg-black overflow-hidden">
          <span className="absolute left-[4px] top-[7px] text-[16px] leading-[20px] text-[#d8d8d8] whitespace-nowrap">[-][俯视][二维线框]</span>

          <div className="absolute left-[777px] top-[223px] w-[2px] h-[164px] bg-[#1c8a14]" />
          <div className="absolute left-[932px] top-[502px] w-[103px] h-[2px] bg-[#24a01e]" />
          <span className="absolute left-[1216px] top-[344px] text-[100px] leading-[150px] tracking-[5px] font-medium text-[#5e5151] whitespace-nowrap">得意工程</span>

          {/* cursor highlight */}
          <div className="absolute left-[453px] top-[387px] w-[38px] h-[38px] rounded-full bg-[#b5af0a]" />
          <svg className="absolute left-[471px] top-[404px]" width="14" height="20" viewBox="0 0 14 20"><path d="M1 1v15l4-3 3 6 2-1-3-6h5z" fill="#f4f4f4" stroke="#222" strokeWidth=".6" /></svg>

          {/* UCS icon */}
          <svg className="absolute left-[8px] top-[630px]" width="110" height="90" viewBox="0 0 110 90" fill="none" stroke="#cfcfcf" strokeWidth="1.400">
            <path d="M12 22v62M12 84h64" />
            <rect x="7" y="78" width="11" height="11" />
            <path d="M81 65l16 16M97 65L81 81" />
            <path d="M14 2l7 8 7-8M21 10v9" />
          </svg>

          {/* view cube */}
          <div className="absolute left-[1655px] top-[55px] w-[124px] h-[124px] rounded-full border-[14px] border-[#2b2b2b]" />
          <div className="absolute left-[1691px] top-[91px] w-[40px] h-[51px] bg-[#c6c9c6] border border-[#8a8a8a] flex items-center">
            <span className="ml-[11px] w-[10px] h-px bg-[#666]" />
          </div>
          <span className="absolute left-[1650px] top-[105px] text-[17px] leading-[24px] text-[#a8a8a8]">西</span>
          <div className="absolute left-[1687px] top-[207px] w-[40px] h-[21px] rounded-[4px] bg-[#c2c2c2] text-[16px] leading-[21px] pl-[4px] text-[#777]">WCS</div>

          {/* command line */}
          <div className="absolute left-[362px] bottom-0 w-[1079px] h-[32px] flex">
            <div className="w-[70px] bg-[#2f3945] flex items-center pl-[6px] rounded-tl-[3px]">
              <span className="w-[4px] h-[22px] border-x border-dotted border-[#b9bdc2]" />
              <span className="ml-[6px] flex"><X size={15} color="#c9ccd0" strokeWidth={2.4} /></span>
              <span className="ml-[11px] flex"><Wrench size={17} color="#c9ccd0" fill="#c9ccd0" /></span>
            </div>
            <div className="flex-1 bg-[#aeaeae] flex items-center pl-[5px] pr-[6px] rounded-tr-[2px]">
              {terminalIcon}
              <span className="ml-[4px] flex"><span className="w-0 h-0 border-x-[4px] border-t-[5px] border-x-transparent border-t-[#444]" /></span>
              <span className="ml-[9px] pb-[2px] text-[15px] italic text-[#6b6b6b] tracking-[1px]">键入命令</span>
              <span className="ml-auto w-0 h-0 border-x-[5px] border-b-[5px] border-x-transparent border-b-[#444]" />
            </div>
          </div>
        </div>
      </div>

      {/* tool palette band */}
      <div className="h-[40px] shrink-0 bg-[#3b4652] pt-[6px] pl-[24px]">
        <div className="w-[1081px] h-[28px] bg-[#323c48] flex items-center pl-[3px]">
          <span className="w-[4px] h-[18px] border-x border-dotted border-[#b9bdc2] shrink-0" />
          <div className="flex items-center gap-[7.9px] ml-[6px]">
            {tools.slice(0, 5).map((t, i) => <Tool key={i}>{t}</Tool>)}
          </div>
          <span className="w-px h-[24px] bg-[#56606c] ml-[9px] mr-[4px] shrink-0" />
          <div className="flex items-center gap-[7.8px]">
            {tools.slice(5).map((t, i) => <Tool key={i}>{t}</Tool>)}
          </div>
        </div>
      </div>

      {/* layout tabs */}
      <div className="h-[26px] shrink-0 bg-[#222b35] flex items-start pt-[1px] text-[15px] text-[#a6acb3]">
        <div className="-ml-[14px] w-[50px] h-[20px] leading-[20px] flex items-center justify-end bg-[#2e3844] pr-[4px] [clip-path:polygon(0_0,100%_0,88%_100%,0_100%)]">布局1</div>
        <div className="ml-[15px] w-[26px] h-[20px] flex items-center justify-center bg-[#2e3844] rounded-[3px]"><Plus size={13} color="#bfc4ca" strokeWidth={3} /></div>
      </div>

      {/* status bar */}
      <div className="h-[30px] shrink-0 bg-[#222b35] flex items-stretch gap-[2px] pl-[238px] relative text-[14.5px] text-[#d2d5d9]">
        <StatusGroup>
          <div className="w-[87px] flex items-center gap-[6px] whitespace-nowrap">比例 1:100 <Caret light /></div>
        </StatusGroup>
        <StatusGroup><div className="w-[174px] text-right pr-[6px] whitespace-nowrap">21125, 15005, 0</div></StatusGroup>
        <StatusGroup><div className="w-[40px] text-center text-[15px]">模型</div></StatusGroup>
        <StatusGroup>
          <StatusCell><Sw><path d="M8 3v18M16 3v18M3 8h18M3 16h18" strokeWidth="2" /></Sw></StatusCell>
          <StatusCell><Sw><g stroke="none" fill="#d5d8db"><rect x="4" y="4" width="3" height="3" /><rect x="11" y="4" width="3" height="3" /><rect x="18" y="4" width="3" height="3" /><rect x="4" y="11" width="3" height="3" /><rect x="11" y="11" width="3" height="3" /><rect x="18" y="11" width="3" height="3" /><rect x="4" y="18" width="3" height="3" /><rect x="11" y="18" width="3" height="3" /><rect x="18" y="18" width="3" height="3" /></g></Sw></StatusCell>
          <StatusCell w={23}><Caret light /></StatusCell>
        </StatusGroup>
        <StatusGroup>
          <StatusCell><Sw><rect x="2" y="15" width="9" height="7" fill="#d5d8db" /><path d="M11 15V3h10v9H12" /></Sw></StatusCell>
          <StatusCell active><Sw><path d="M3 8h8M7 4v8" stroke="#f2f4f6" strokeWidth="2" /><rect x="6" y="15" width="16" height="6" fill="#f2f4f6" stroke="none" /></Sw></StatusCell>
          <StatusCell w={31}><Sw><path d="M5 3v18h17M11 14v7" /></Sw></StatusCell>
          <StatusCell w={31} active><Sw><circle cx="11" cy="13" r="8" stroke="#eef1f4" /><path d="M11 13L21 6M11 13h11" stroke="#eef1f4" /></Sw></StatusCell>
          <StatusCell w={20}><Caret light /></StatusCell>
          <StatusCell><Sw><path d="M5 3l14 19" stroke="#a8485a" /><path d="M12 2v20" /><circle cx="12" cy="12" r="2" fill="#d5d8db" /></Sw></StatusCell>
          <StatusCell w={20}><Caret light /></StatusCell>
          <StatusCell w={31} active><Sw><path d="M2 21L19 4M2 21h20" stroke="#eef1f4" strokeWidth="1.800" /></Sw></StatusCell>
          <StatusCell active><Sw><path d="M6 6h16v16H6z" stroke="#eef1f4" /><rect x="2" y="2" width="7" height="7" fill="#5f93c2" stroke="#eef1f4" /></Sw></StatusCell>
          <StatusCell w={22}><Caret light /></StatusCell>
        </StatusGroup>
        <StatusGroup>
          <StatusCell w={28}><Sw><path d="M3 5h18M3 9h12M3 13h18M3 17h10M3 21h14" strokeWidth="2.200" /></Sw></StatusCell>
          <StatusCell w={31} active>
            <div className="w-[24px] h-[24px] border-2 border-[#eef1f4] grid grid-cols-4 grid-rows-4 bg-[#5f93c2]">
              <span className="bg-white" /><span /><span className="bg-white" /><span />
              <span /><span className="bg-white" /><span /><span className="bg-white" />
              <span className="bg-white" /><span /><span className="bg-white" /><span />
              <span /><span className="bg-white" /><span /><span className="bg-white" />
            </div>
          </StatusCell>
          <StatusCell w={32}><Sw><path d="M2 5h6M5 2v6" strokeWidth="1.600" /><rect x="9" y="9" width="12" height="13" fill="#8ecf9a" stroke="none" /><path d="M6 6h13v3" stroke="#9aa0a8" /></Sw></StatusCell>
          <StatusCell w={32}><Sw><path d="M8 8l6-6h8v12l-6 6H8zM8 8h8v12M16 8l6-6" /><rect x="2" y="17" width="6" height="6" stroke="#c9a45a" /></Sw></StatusCell>
          <StatusCell w={20}><Caret light /></StatusCell>
        </StatusGroup>
        <StatusGroup>
          <StatusCell active><Sw><path d="M4 3v18h18" stroke="#eef1f4" strokeWidth="1.800" /><path d="M1 6l3-4 3 4M19 18l4 3-4 3" fill="#eef1f4" stroke="none" /><path d="M15 3l-4 7h4l-3 7" stroke="#eef1f4" strokeWidth="1.800" /></Sw></StatusCell>
          <StatusCell><Sw><rect x="5" y="5" width="15" height="15" strokeDasharray="3 2" stroke="#7fb4dc" /><g fill="#7fb4dc" stroke="none"><rect x="3" y="3" width="4" height="4" /><rect x="18" y="3" width="4" height="4" /><rect x="3" y="18" width="4" height="4" /><rect x="18" y="18" width="4" height="4" /></g></Sw></StatusCell>
          <StatusCell w={20}><Caret light /></StatusCell>
          <StatusCell active><Sw><path d="M12 2l9 5v10l-9 5-9-5V7z" stroke="#eef1f4" /><circle cx="12" cy="13" r="4" stroke="#eef1f4" /><path d="M12 2v7" stroke="#eef1f4" /></Sw></StatusCell>
          <StatusCell w={22}><Caret light /></StatusCell>
        </StatusGroup>
        <StatusGroup>
          <StatusCell active><svg width="24" height="24" viewBox="0 0 24 24" fill="#f2f4f6"><path d="M11 2l2 10 8 9-9-4-9 4 6-9z" /><circle cx="19" cy="5" r="3" fill="none" stroke="#f2f4f6" strokeWidth="1.400" /></svg></StatusCell>
          <StatusCell><svg width="24" height="24" viewBox="0 0 24 24" fill="#d5d8db"><path d="M10 3l2 9 8 9-9-4-8 4 6-9z" /><path d="M18 1l-4 6h4l-3 5" stroke="#d5d8db" fill="none" strokeWidth="1.400" /></svg></StatusCell>
          <StatusCell w={32}><svg width="24" height="24" viewBox="0 0 24 24" fill="#d5d8db"><path d="M12 3l2 9 8 9-10-4-10 4 8-9z" /></svg></StatusCell>
          <div className="w-[68px] ml-[4px] whitespace-nowrap">1:1 / 100%</div>
          <StatusCell w={18}><Caret light /></StatusCell>
        </StatusGroup>
        <StatusGroup>
          <StatusCell w={32}>
            <svg width="22" height="22" viewBox="0 0 22 22" fill="none" stroke="#d5d8db"><circle cx="11" cy="11" r="6" strokeWidth="4" /><circle cx="11" cy="11" r="9" strokeWidth="3.500" strokeDasharray="4.500 2.570" /></svg>
          </StatusCell>
          <StatusCell w={20}><Caret light /></StatusCell>
        </StatusGroup>
        <StatusGroup><StatusCell><Plus size={24} color="#d5d8db" strokeWidth={1.800} /></StatusCell></StatusGroup>
        <StatusGroup>
          <StatusCell w={32}><svg width="14" height="24" viewBox="0 0 14 24"><path d="M2 1l10 4v18H2z" fill="#d5d8db" /><path d="M8 7h4M8 11h4M8 15h4M8 19h4" stroke="#3a4552" /></svg></StatusCell>
          <div className="w-[70px] pl-[5px] text-[15px]">小数</div>
          <StatusCell w={20}><Caret light /></StatusCell>
        </StatusGroup>

        {/* input method bar */}
        <div className="absolute left-[1610px] right-0 top-0 bottom-0 bg-white flex items-center pl-[18px] text-[#1668b8] overflow-hidden">
          <span className="text-[16px] font-medium">英</span>
          <span className="ml-[12px] text-[16px] font-bold">·,</span>
          <span className="ml-[8px] flex"><Mic size={19} color="#1668b8" strokeWidth={2.400} /></span>
          <span className="ml-[8px] flex"><svg width="18" height="18" viewBox="0 0 18 18" fill="none" stroke="#1668b8" strokeWidth="1.500"><rect x="1" y="2" width="16" height="14" rx="2" /><path d="M1 7h16M1 11h16M6 2v14M12 2v14" /></svg></span>
        </div>
        <div className="absolute left-[1582px] -top-[5px] w-[38px] h-[35px] overflow-hidden">
          <div className="w-[34px] h-[34px] mt-[2px] ml-[2px] rounded-[5px] bg-[#ea6a2c] -rotate-12 flex items-center justify-center text-[30px] leading-none font-bold italic text-white">S</div>
        </div>
      </div>

      <div className="h-[32px] shrink-0" />
    </div>
  );
}
